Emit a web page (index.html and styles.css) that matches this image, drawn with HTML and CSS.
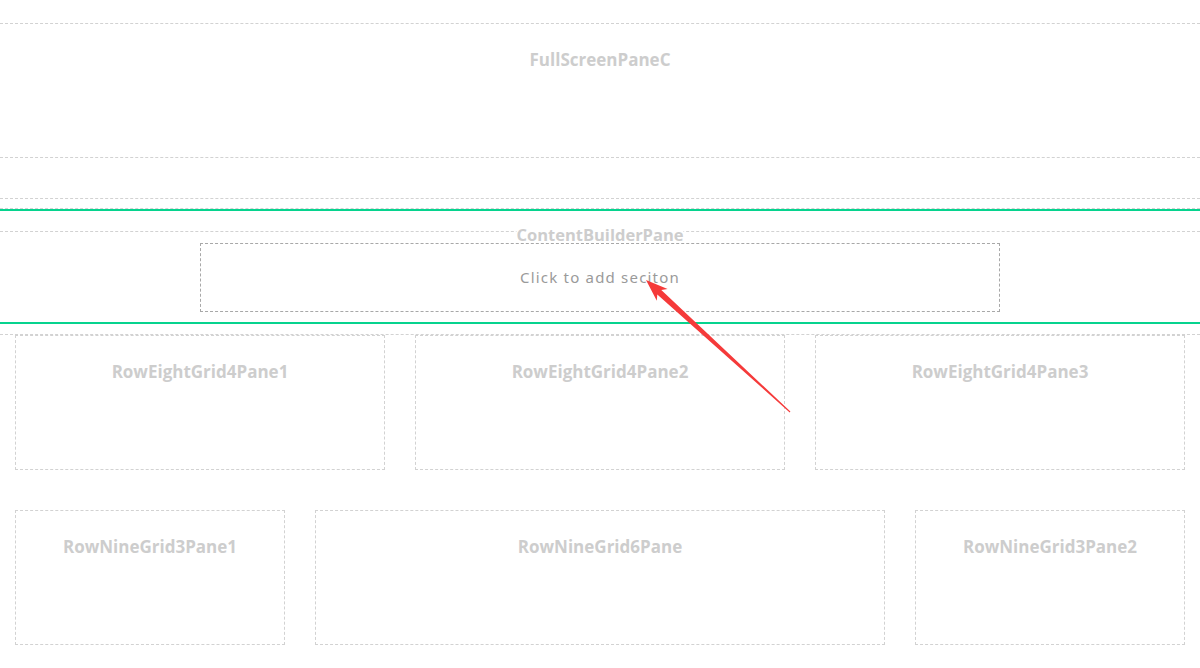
FILE: index.html
```html
<!DOCTYPE html>
<html lang="en">
<head>
<meta charset="utf-8">
<title>Page builder</title>
<link rel="stylesheet" href="styles.css">
</head>
<body>
<div class="page">
  <section class="pane pane-full">
    <div class="pane-label">FullScreenPaneC</div>
  </section>

  <div class="builder-wrap">
    <div class="builder-slot">
      <div class="builder-section">
        <div class="builder-pane">
          <div class="builder-label">ContentBuilderPane</div>
          <div class="add-section"><span class="add-text">Click to add seciton</span></div>
        </div>
      </div>
    </div>
  </div>

  <div class="row row-eight">
    <div class="col col-4"><div class="pane grid-pane"><div class="pane-label">RowEightGrid4Pane1</div></div></div>
    <div class="col col-4"><div class="pane grid-pane"><div class="pane-label">RowEightGrid4Pane2</div></div></div>
    <div class="col col-4"><div class="pane grid-pane"><div class="pane-label">RowEightGrid4Pane3</div></div></div>
  </div>

  <div class="row row-nine">
    <div class="col col-3"><div class="pane grid-pane"><div class="pane-label">RowNineGrid3Pane1</div></div></div>
    <div class="col col-6"><div class="pane grid-pane"><div class="pane-label">RowNineGrid6Pane</div></div></div>
    <div class="col col-3"><div class="pane grid-pane"><div class="pane-label">RowNineGrid3Pane2</div></div></div>
  </div>

  <svg class="annotation-arrow" width="1200" height="668" viewBox="0 0 1200 668" aria-hidden="true">
    <polygon fill="#f53a3a" points="646,280 667.6,289 661.3,290 790.4,411.6 789.7,412.4 657.3,294.4 656.8,300.8"/>
  </svg>
</div>
</body>
</html>
```

FILE: styles.css
```css
* {
  box-sizing: border-box;
}

html, body {
  margin: 0;
  padding: 0;
  background: #ffffff;
}

body {
  font-family: "Open Sans", Lato, "Noto Sans", sans-serif;
  overflow: hidden;
}

.page {
  position: relative;
  width: 1200px;
  height: 668px;
  padding-top: 23px;
}

.pane {
  padding-top: 26px;
}

.pane-label {
  font-size: 17px;
  font-weight: 700;
  line-height: 20px;
  color: #cdcdcd;
  text-align: center;
}

.pane-full {
  height: 135px;
  border-top: 1px dashed #d2d2d2;
  border-bottom: 1px dashed #d2d2d2;
}

.builder-wrap {
  margin-top: 40px;
  border-top: 1px dashed #d2d2d2;
  padding-top: 9px;
}

.builder-slot {
  border-top: 1px dashed #d2d2d2;
}

.builder-section {
  border-top: 2px solid #06d38e;
  border-bottom: 2px solid #06d38e;
  padding: 20px 0 10px;
}

.builder-pane {
  position: relative;
  border-top: 1px dashed #d2d2d2;
  padding-top: 11px;
}

.builder-label {
  position: absolute;
  top: -7px;
  left: 50%;
  transform: translateX(-50%);
  background: #ffffff;
  font-size: 16.5px;
  font-weight: 700;
  line-height: 20px;
  color: #cdcdcd;
  white-space: nowrap;
}

.add-section {
  position: relative;
  width: 800px;
  height: 69px;
  margin: 0 auto;
  border: 1px dashed #a8a8a8;
  display: flex;
  align-items: center;
  justify-content: center;
  font-family: "Noto Sans", "Open Sans", sans-serif;
  font-size: 15px;
  letter-spacing: 1.2px;
  color: #9a9a9a;
}

.add-text {
  position: relative;
  top: -1px;
}

.row {
  display: flex;
}

.row-eight {
  margin-top: 10px;
  border-top: 1px dashed #d2d2d2;
}

.row-nine {
  margin-top: 40px;
}

.col {
  padding: 0 15px;
}

.col-3 { width: 300px; }
.col-4 { width: 400px; }
.col-6 { width: 600px; }

.grid-pane {
  height: 135px;
  border: 1px dashed #d2d2d2;
}

.annotation-arrow {
  position: absolute;
  top: 0;
  left: 0;
  pointer-events: none;
}
```
